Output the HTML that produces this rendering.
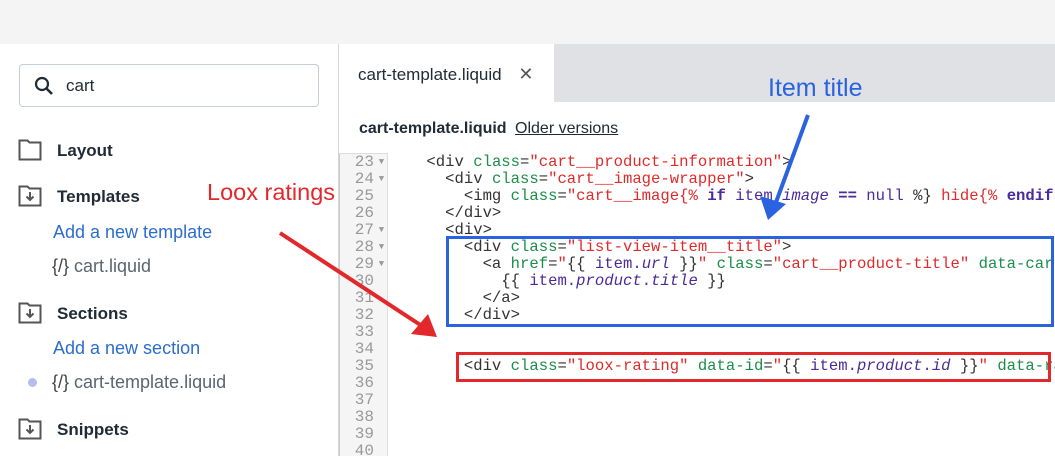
<!DOCTYPE html>
<html><head><meta charset="utf-8"><style>
*{margin:0;padding:0;box-sizing:border-box}
body{width:1055px;height:456px;overflow:hidden;background:#fff;font-family:"Liberation Sans",sans-serif;position:relative}
.top{position:absolute;left:0;top:0;width:1055px;height:44px;background:#f4f4f4}
.side{position:absolute;left:0;top:44px;width:339px;height:412px;background:#fff;border-right:1px solid #d6d6d6}
.search{position:absolute;left:19px;top:20px;width:300px;height:43px;border:1px solid #c4cdd5;border-radius:4px}
.search span{position:absolute;left:46px;top:11px;font-size:17px;color:#212b36}
.it{position:absolute;font-size:17px}
.hd{font-weight:bold;color:#212b36;left:57px}
.lk{color:#2c6ecb;left:53px;font-size:18px}
.fl{color:#5a6570;left:52px;font-size:18px}
.fold{position:absolute;left:18px;width:24px;height:22px}
.tabs{position:absolute;left:340px;top:44px;width:715px;height:58px;background:#dfe1e5}
.tab{position:absolute;left:0;top:0;width:214px;height:58px;background:#fff;font-size:17px;color:#212b36;padding:20px 0 0 18px}
.title{position:absolute;left:359px;top:120px;font-size:16px;color:#212b36}
.gut{position:absolute;left:339px;top:153px;width:49px;height:303px;background:#f5f5f5;border-left:1px solid #ccc;border-right:1px solid #ddd;border-top:1px solid #ddd}
.code{position:absolute;left:340px;top:154px;font-family:"Liberation Mono",monospace;font-size:15.6px;line-height:17px;white-space:pre;color:#333}
.code div{height:17px;line-height:17px;overflow:visible}
.ln{display:inline-block;width:34px;text-align:right;color:#999;font-size:16px;line-height:17px;vertical-align:top}
.ar{display:inline-block;width:15px;color:#999;font-size:9px;line-height:17px;text-align:center;vertical-align:top}
.a{color:#1a8f4a}.s{color:#e02a2a}.v{color:#4b2a9a}.k{color:#4b2a9a;font-weight:bold}
i{font-style:italic}
</style></head><body>
<div class="top"></div>
<div class="side">
<div class="search"><svg style="position:absolute;left:14px;top:11px" width="20" height="20" viewBox="0 0 20 20"><circle cx="8" cy="8" r="6" fill="none" stroke="#212b36" stroke-width="2.2"/><path d="M12.5 12.5L18 18" stroke="#212b36" stroke-width="2.6"/></svg><span>cart</span></div>
<svg class="fold" style="top:95px" viewBox="0 0 24 22"><path d="M1.5 1.5h8l2 2h11v17h-21z" fill="none" stroke="#555" stroke-width="2"/></svg>
<div class="it hd" style="top:97px">Layout</div>
<svg class="fold" style="top:141px" viewBox="0 0 24 22"><path d="M1.5 1.5h8l2 2h11v17h-21z" fill="none" stroke="#555" stroke-width="2"/><path d="M12 7v8M8.5 11.5L12 15l3.5-3.5" fill="none" stroke="#555" stroke-width="2"/></svg>
<div class="it hd" style="top:143px">Templates</div>
<div class="it lk" style="top:178px">Add a new template</div>
<div class="it fl" style="top:212px"><b style="font-weight:normal;color:#444">{/}</b> cart.liquid</div>
<svg class="fold" style="top:258px" viewBox="0 0 24 22"><path d="M1.5 1.5h8l2 2h11v17h-21z" fill="none" stroke="#555" stroke-width="2"/><path d="M12 7v8M8.5 11.5L12 15l3.5-3.5" fill="none" stroke="#555" stroke-width="2"/></svg>
<div class="it hd" style="top:260px">Sections</div>
<div class="it lk" style="top:294px">Add a new section</div>
<div style="position:absolute;left:28px;top:334px;width:9px;height:9px;border-radius:50%;background:#b4bcf0"></div>
<div class="it fl" style="top:328px"><b style="font-weight:normal;color:#444">{/}</b> cart-template.liquid</div>
<svg class="fold" style="top:374px" viewBox="0 0 24 22"><path d="M1.5 1.5h8l2 2h11v17h-21z" fill="none" stroke="#555" stroke-width="2"/><path d="M12 7v8M8.5 11.5L12 15l3.5-3.5" fill="none" stroke="#555" stroke-width="2"/></svg>
<div class="it hd" style="top:376px">Snippets</div>
</div>
<div class="tabs"><div class="tab">cart-template.liquid <span style="margin-left:12px;color:#555;font-size:18px">✕</span></div></div>
<div class="title"><b>cart-template.liquid</b> <span style="text-decoration:underline;margin-left:4px">Older versions</span></div>
<div class="gut"></div>
<div class="code"><div><span class="ln">23</span><span class="ar">▼</span>    &lt;div <span class="a">class</span>=<span class="s">"cart__product-information"</span>&gt;</div><div><span class="ln">24</span><span class="ar">▼</span>      &lt;div <span class="a">class</span>=<span class="s">"cart__image-wrapper"</span>&gt;</div><div><span class="ln">25</span><span class="ar"></span>        &lt;img <span class="a">class</span>=<span class="s">"cart__image{%</span> <span class="k">if</span> <span class="v">item.<i>image</i></span> <span class="k">==</span> <span class="v">null</span> %} <span class="s">hide{%</span> <span class="k">endif</span></div><div><span class="ln">26</span><span class="ar"></span>      &lt;/div&gt;</div><div><span class="ln">27</span><span class="ar">▼</span>      &lt;div&gt;</div><div><span class="ln">28</span><span class="ar">▼</span>        &lt;div <span class="a">class</span>=<span class="s">"list-view-item__title"</span>&gt;</div><div><span class="ln">29</span><span class="ar">▼</span>          &lt;a <span class="a">href</span>=<span class="s">"</span>{{ <span class="v">item.<i>url</i></span> }}<span class="s">"</span> <span class="a">class</span>=<span class="s">"cart__product-title"</span> <span class="a">data-cart</span></div><div><span class="ln">30</span><span class="ar"></span>            {{ <span class="v">item.<i>product</i>.<i>title</i></span> }}</div><div><span class="ln">31</span><span class="ar"></span>          &lt;/a&gt;</div><div><span class="ln">32</span><span class="ar"></span>        &lt;/div&gt;</div><div><span class="ln">33</span><span class="ar"></span></div><div><span class="ln">34</span><span class="ar"></span></div><div><span class="ln">35</span><span class="ar"></span>        &lt;div <span class="a">class</span>=<span class="s">"loox-rating"</span> <span class="a">data-id</span>=<span class="s">"</span>{{ <span class="v">item.<i>product</i>.<i>id</i></span> }}<span class="s">"</span> <span class="a">data-ra</span></div><div><span class="ln">36</span><span class="ar"></span></div><div><span class="ln">37</span><span class="ar"></span></div><div><span class="ln">38</span><span class="ar"></span></div><div><span class="ln">39</span><span class="ar"></span></div><div><span class="ln">40</span><span class="ar"></span></div></div>
<div style="position:absolute;left:446px;top:236px;width:608px;height:91px;border:3px solid #2a62e0"></div>
<div style="position:absolute;left:456px;top:352px;width:595px;height:30px;border:3px solid #e3282c"></div>
<div style="position:absolute;left:207px;top:179px;font-size:23.5px;color:#e3282c">Loox ratings</div>
<div style="position:absolute;left:768px;top:74px;font-size:25px;color:#2a62e0">Item title</div>
<svg style="position:absolute;left:0;top:0" width="1055" height="456">
<path d="M280 233L425 328" stroke="#e3282c" stroke-width="4"/>
<path d="M437 337L411 334L428 314Z" fill="#e3282c"/>
<path d="M808 115L775 205" stroke="#2a62e0" stroke-width="4"/>
<path d="M768 220L760 196L786 204Z" fill="#2a62e0"/>
</svg>
</body></html>
